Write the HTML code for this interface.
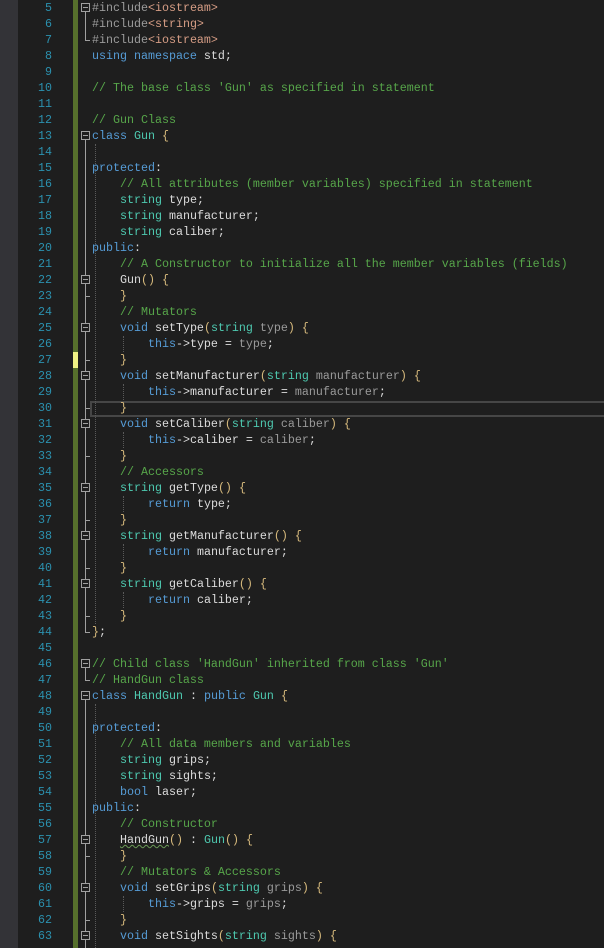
<!DOCTYPE html>
<html><head><meta charset="utf-8">
<style>
html,body{margin:0;padding:0;overflow:hidden;width:604px;height:948px;}
body{background:#1e1e1e;position:relative;font-family:"Liberation Mono",monospace;font-size:11.67px;}
.strip{position:absolute;left:0;top:0;width:18px;height:948px;background:#333337;}
.bar{position:absolute;left:73px;top:0;width:5px;height:948px;background:#56702c;}
.yb{position:absolute;left:73px;top:352px;width:5px;height:16px;background:#eff284;}
.ln{position:absolute;left:18px;width:34px;text-align:right;color:#2b91af;height:16px;line-height:16px;}
.cd{position:absolute;left:92px;height:16px;line-height:16px;color:#dcdcdc;white-space:pre;}
.k{color:#569cd6}.t{color:#4ec9b0}.c{color:#57a64a}.s{color:#d69d85}.p{color:#9a9a9a}.b{color:#d7ba7d}.g{color:#9b9b9b}.w{color:#dcdcdc}
.box{position:absolute;left:81px;width:7px;height:7px;border:1px solid #a0a0a0;background:#1e1e1e;}
.box:after{content:"";position:absolute;left:1px;top:3px;width:5px;height:1px;background:#a0a0a0;}
.fl{position:absolute;left:85px;border-left:1px solid #a0a0a0;border-bottom:1px solid #a0a0a0;width:4px;}
.ig{position:absolute;border-left:1px dotted #5a5a5a;width:0;}
.cur{position:absolute;left:90px;top:401px;width:530px;height:12px;border:2px solid #464646;}
.sq{text-decoration:underline wavy #6a9955;text-decoration-thickness:1px;}
.wrap{position:absolute;left:0;top:0;width:604px;height:948px;overflow:hidden;}
</style></head><body><div class="wrap">
<div class="strip"></div>
<div class="bar"></div>
<div class="yb"></div>
<div class="cur"></div>

<div class="ln" style="top:0">5</div><div class="ln" style="top:16px">6</div><div class="ln" style="top:32px">7</div><div class="ln" style="top:48px">8</div><div class="ln" style="top:64px">9</div><div class="ln" style="top:80px">10</div><div class="ln" style="top:96px">11</div><div class="ln" style="top:112px">12</div><div class="ln" style="top:128px">13</div><div class="ln" style="top:144px">14</div><div class="ln" style="top:160px">15</div><div class="ln" style="top:176px">16</div><div class="ln" style="top:192px">17</div><div class="ln" style="top:208px">18</div><div class="ln" style="top:224px">19</div><div class="ln" style="top:240px">20</div><div class="ln" style="top:256px">21</div><div class="ln" style="top:272px">22</div><div class="ln" style="top:288px">23</div><div class="ln" style="top:304px">24</div><div class="ln" style="top:320px">25</div><div class="ln" style="top:336px">26</div><div class="ln" style="top:352px">27</div><div class="ln" style="top:368px">28</div><div class="ln" style="top:384px">29</div><div class="ln" style="top:400px">30</div><div class="ln" style="top:416px">31</div><div class="ln" style="top:432px">32</div><div class="ln" style="top:448px">33</div><div class="ln" style="top:464px">34</div><div class="ln" style="top:480px">35</div><div class="ln" style="top:496px">36</div><div class="ln" style="top:512px">37</div><div class="ln" style="top:528px">38</div><div class="ln" style="top:544px">39</div><div class="ln" style="top:560px">40</div><div class="ln" style="top:576px">41</div><div class="ln" style="top:592px">42</div><div class="ln" style="top:608px">43</div><div class="ln" style="top:624px">44</div><div class="ln" style="top:640px">45</div><div class="ln" style="top:656px">46</div><div class="ln" style="top:672px">47</div><div class="ln" style="top:688px">48</div><div class="ln" style="top:704px">49</div><div class="ln" style="top:720px">50</div><div class="ln" style="top:736px">51</div><div class="ln" style="top:752px">52</div><div class="ln" style="top:768px">53</div><div class="ln" style="top:784px">54</div><div class="ln" style="top:800px">55</div><div class="ln" style="top:816px">56</div><div class="ln" style="top:832px">57</div><div class="ln" style="top:848px">58</div><div class="ln" style="top:864px">59</div><div class="ln" style="top:880px">60</div><div class="ln" style="top:896px">61</div><div class="ln" style="top:912px">62</div><div class="ln" style="top:928px">63</div>

<div class="fl" style="top:12px;height:28px"></div>
<div class="fl" style="top:140px;height:492px"></div>
<div class="fl" style="top:284px;height:12px"></div>
<div class="fl" style="top:332px;height:28px"></div>
<div class="fl" style="top:380px;height:28px"></div>
<div class="fl" style="top:428px;height:28px"></div>
<div class="fl" style="top:492px;height:28px"></div>
<div class="fl" style="top:540px;height:28px"></div>
<div class="fl" style="top:588px;height:28px"></div>
<div class="fl" style="top:668px;height:12px"></div>
<div class="fl" style="top:700px;height:260px;border-bottom:none"></div>
<div class="fl" style="top:844px;height:12px"></div>
<div class="fl" style="top:892px;height:28px"></div>

<div class="box" style="top:3px"></div>
<div class="box" style="top:131px"></div>
<div class="box" style="top:275px"></div>
<div class="box" style="top:323px"></div>
<div class="box" style="top:371px"></div>
<div class="box" style="top:419px"></div>
<div class="box" style="top:483px"></div>
<div class="box" style="top:531px"></div>
<div class="box" style="top:579px"></div>
<div class="box" style="top:659px"></div>
<div class="box" style="top:691px"></div>
<div class="box" style="top:835px"></div>
<div class="box" style="top:883px"></div>
<div class="box" style="top:931px"></div>

<div class="ig" style="left:95px;top:144px;height:480px"></div>
<div class="ig" style="left:95px;top:704px;height:244px"></div>
<div class="ig" style="left:123px;top:336px;height:16px"></div>
<div class="ig" style="left:123px;top:384px;height:16px"></div>
<div class="ig" style="left:123px;top:432px;height:16px"></div>
<div class="ig" style="left:123px;top:496px;height:16px"></div>
<div class="ig" style="left:123px;top:544px;height:16px"></div>
<div class="ig" style="left:123px;top:592px;height:16px"></div>
<div class="ig" style="left:123px;top:896px;height:16px"></div>

<div class="cd" style="top:0"><span class="g">#include</span><span class="s">&lt;iostream&gt;</span></div>
<div class="cd" style="top:16px"><span class="g">#include</span><span class="s">&lt;string&gt;</span></div>
<div class="cd" style="top:32px"><span class="g">#include</span><span class="s">&lt;iostream&gt;</span></div>
<div class="cd" style="top:48px"><span class="k">using namespace</span> std;</div>
<div class="cd" style="top:80px"><span class="c">// The base class 'Gun' as specified in statement</span></div>
<div class="cd" style="top:112px"><span class="c">// Gun Class</span></div>
<div class="cd" style="top:128px"><span class="k">class</span> <span class="t">Gun</span> <span class="b">{</span></div>
<div class="cd" style="top:160px"><span class="k">protected</span>:</div>
<div class="cd" style="top:176px">    <span class="c">// All attributes (member variables) specified in statement</span></div>
<div class="cd" style="top:192px">    <span class="t">string</span> type;</div>
<div class="cd" style="top:208px">    <span class="t">string</span> manufacturer;</div>
<div class="cd" style="top:224px">    <span class="t">string</span> caliber;</div>
<div class="cd" style="top:240px"><span class="k">public</span>:</div>
<div class="cd" style="top:256px">    <span class="c">// A Constructor to initialize all the member variables (fields)</span></div>
<div class="cd" style="top:272px">    Gun<span class="b">()</span> <span class="b">{</span></div>
<div class="cd" style="top:288px">    <span class="b">}</span></div>
<div class="cd" style="top:304px">    <span class="c">// Mutators</span></div>
<div class="cd" style="top:320px">    <span class="k">void</span> setType<span class="b">(</span><span class="t">string</span> <span class="p">type</span><span class="b">)</span> <span class="b">{</span></div>
<div class="cd" style="top:336px">        <span class="k">this</span>-&gt;type = <span class="p">type</span>;</div>
<div class="cd" style="top:352px">    <span class="b">}</span></div>
<div class="cd" style="top:368px">    <span class="k">void</span> setManufacturer<span class="b">(</span><span class="t">string</span> <span class="p">manufacturer</span><span class="b">)</span> <span class="b">{</span></div>
<div class="cd" style="top:384px">        <span class="k">this</span>-&gt;manufacturer = <span class="p">manufacturer</span>;</div>
<div class="cd" style="top:400px">    <span class="b">}</span></div>
<div class="cd" style="top:416px">    <span class="k">void</span> setCaliber<span class="b">(</span><span class="t">string</span> <span class="p">caliber</span><span class="b">)</span> <span class="b">{</span></div>
<div class="cd" style="top:432px">        <span class="k">this</span>-&gt;caliber = <span class="p">caliber</span>;</div>
<div class="cd" style="top:448px">    <span class="b">}</span></div>
<div class="cd" style="top:464px">    <span class="c">// Accessors</span></div>
<div class="cd" style="top:480px">    <span class="t">string</span> getType<span class="b">()</span> <span class="b">{</span></div>
<div class="cd" style="top:496px">        <span class="k">return</span> type;</div>
<div class="cd" style="top:512px">    <span class="b">}</span></div>
<div class="cd" style="top:528px">    <span class="t">string</span> getManufacturer<span class="b">()</span> <span class="b">{</span></div>
<div class="cd" style="top:544px">        <span class="k">return</span> manufacturer;</div>
<div class="cd" style="top:560px">    <span class="b">}</span></div>
<div class="cd" style="top:576px">    <span class="t">string</span> getCaliber<span class="b">()</span> <span class="b">{</span></div>
<div class="cd" style="top:592px">        <span class="k">return</span> caliber;</div>
<div class="cd" style="top:608px">    <span class="b">}</span></div>
<div class="cd" style="top:624px"><span class="b">}</span>;</div>
<div class="cd" style="top:656px"><span class="c">// Child class 'HandGun' inherited from class 'Gun'</span></div>
<div class="cd" style="top:672px"><span class="c">// HandGun class</span></div>
<div class="cd" style="top:688px"><span class="k">class</span> <span class="t">HandGun</span> : <span class="k">public</span> <span class="t">Gun</span> <span class="b">{</span></div>
<div class="cd" style="top:720px"><span class="k">protected</span>:</div>
<div class="cd" style="top:736px">    <span class="c">// All data members and variables</span></div>
<div class="cd" style="top:752px">    <span class="t">string</span> grips;</div>
<div class="cd" style="top:768px">    <span class="t">string</span> sights;</div>
<div class="cd" style="top:784px">    <span class="k">bool</span> laser;</div>
<div class="cd" style="top:800px"><span class="k">public</span>:</div>
<div class="cd" style="top:816px">    <span class="c">// Constructor</span></div>
<div class="cd" style="top:832px">    <span class="sq">HandGun</span><span class="b">()</span> : <span class="t">Gun</span><span class="b">()</span> <span class="b">{</span></div>
<div class="cd" style="top:848px">    <span class="b">}</span></div>
<div class="cd" style="top:864px">    <span class="c">// Mutators &amp; Accessors</span></div>
<div class="cd" style="top:880px">    <span class="k">void</span> setGrips<span class="b">(</span><span class="t">string</span> <span class="p">grips</span><span class="b">)</span> <span class="b">{</span></div>
<div class="cd" style="top:896px">        <span class="k">this</span>-&gt;grips = <span class="p">grips</span>;</div>
<div class="cd" style="top:912px">    <span class="b">}</span></div>
<div class="cd" style="top:928px">    <span class="k">void</span> setSights<span class="b">(</span><span class="t">string</span> <span class="p">sights</span><span class="b">)</span> <span class="b">{</span></div>
</div></body></html>
